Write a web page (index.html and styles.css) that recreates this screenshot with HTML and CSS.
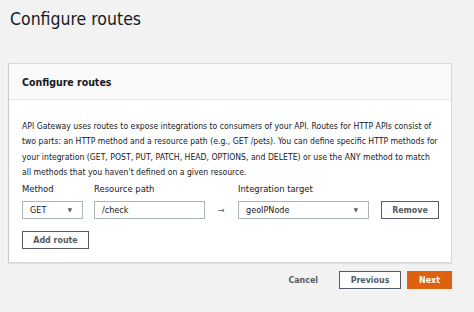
FILE: index.html
```html
<!DOCTYPE html>
<html lang="en">
<head>
    <meta charset="UTF-8">
    <title>Configure routes</title>
    <link rel="stylesheet" href="styles.css">
</head>
<body>
    <h1 class="page-title">Configure routes</h1>

    <div class="card">
        <div class="card-header">Configure routes</div>
        <div class="card-body">
            <p class="intro">API Gateway uses routes to expose integrations to consumers of your API. Routes for HTTP APIs consist of two parts: an HTTP method and a resource path (e.g., GET /pets). You can define specific HTTP methods for your integration (GET, POST, PUT, PATCH, HEAD, OPTIONS, and DELETE) or use the ANY method to match all methods that you haven't defined on a given resource.</p>

            <div class="route-grid">
                <label class="field-label">Method</label>
                <label class="field-label">Resource path</label>
                <span></span>
                <label class="field-label">Integration target</label>
                <span></span>

                <div class="select">
                    <span>GET</span>
                    <span class="caret">&#9660;</span>
                </div>
                <div class="text-input">/check</div>
                <span class="arrow">&rarr;</span>
                <div class="select">
                    <span>geoIPNode</span>
                    <span class="caret">&#9660;</span>
                </div>
                <button class="btn">Remove</button>
            </div>

            <button class="btn add-route">Add route</button>
        </div>
    </div>

    <div class="actions">
        <button class="btn-link">Cancel</button>
        <button class="btn">Previous</button>
        <button class="btn btn-primary">Next</button>
    </div>
</body>
</html>
```

FILE: styles.css
```css
body {
    margin: 0;
    background: #f2f2f2;
    font-family: 'DejaVu Sans Condensed', 'DejaVu Sans', sans-serif;
    font-stretch: condensed;
    color: #16191f;
}
.page-title {
    margin: 0;
    padding: 7px 10px 0;
    height: 63px;
    box-sizing: border-box;
    font-size: 17.5px;
    font-weight: 400;
    line-height: 24px;
}
.card {
    margin-left: 8px;
    width: 444px;
    box-sizing: border-box;
    background: #fff;
    border: 1px solid #d9d9d9;
    border-left-color: #c8c8c8;
    box-shadow: 0 1px 1px rgba(0,0,0,0.08);
}
.card-header {
    height: 36px;
    box-sizing: border-box;
    padding: 10px 13px 0;
    background: #fafafa;
    border-bottom: 1px solid #e6e6e6;
    font-size: 10.5px;
    font-weight: 700;
    line-height: 16px;
}
.card-body {
    padding: 19px 13px 13px;
}
.intro {
    margin: 0 0 1px;
    font-size: 8.6px;
    line-height: 15.4px;
}
.route-grid {
    display: grid;
    grid-template-columns: 61px 111px 11px 131px 59px;
    column-gap: 11px;
    row-gap: 5px;
    align-items: center;
}
.field-label {
    font-size: 9.4px;
    line-height: 14px;
    color: #16191f;
}
.select, .text-input {
    height: 18px;
    box-sizing: border-box;
    border: 1px solid #aab7b8;
    background: #fff;
    font-size: 9px;
    display: flex;
    align-items: center;
    padding: 0 7px;
}
.select {
    justify-content: space-between;
}
.caret {
    font-size: 6px;
    color: #545b64;
    margin-right: 3px;
}
.arrow {
    font-size: 9px;
    color: #545b64;
    text-align: center;
}
.route-grid .btn {
    margin-left: 1px;
}
.btn {
    height: 18px;
    box-sizing: border-box;
    border: 1px solid #545b64;
    background: #fff;
    font-family: inherit;
    font-size: 8.8px;
    font-weight: 700;
    color: #545b64;
    padding: 0;
    cursor: pointer;
}
.add-route {
    display: block;
    margin-top: 12px;
    width: 67px;
}
.actions {
    display: flex;
    justify-content: flex-end;
    align-items: center;
    gap: 6px;
    width: 452px;
    margin-top: 8px;
}
.actions .btn {
    width: 62px;
}
.btn-link {
    border: none;
    background: none;
    font-family: inherit;
    font-size: 8.8px;
    font-weight: 700;
    color: #545b64;
    margin-right: 9px;
}
.actions .btn-primary {
    width: 45px;
    background: #df600e;
    border-color: #df600e;
    color: #fff;
}
```
